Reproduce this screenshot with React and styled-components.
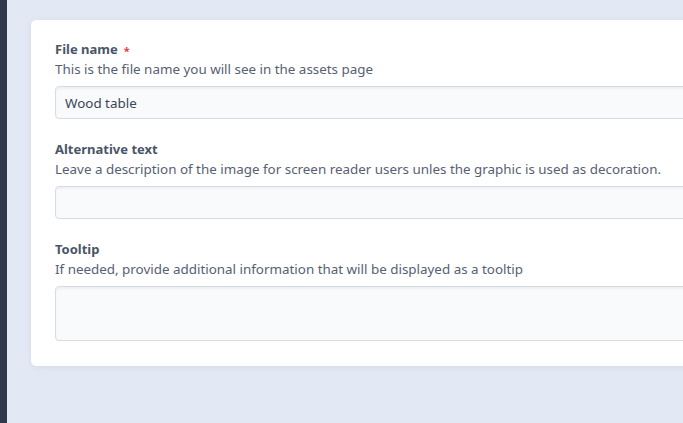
import React from 'react'
import styled, { createGlobalStyle } from 'styled-components'

const GlobalStyle = createGlobalStyle`
    html, body {
        margin: 0;
        padding: 0;
        height: 100%;
        overflow: hidden;
    }
    body {
        font-family: "Noto Sans", "Open Sans", sans-serif;
        background: #e3e9f4;
    }
`

const Layout = styled.div`
    display: flex;
    width: 683px;
    height: 423px;
    overflow: hidden;
`

const Sidebar = styled.aside`
    flex: 0 0 7px;
    background: #2e3a4c;
`

const Main = styled.main`
    flex: 1;
    padding: 20px 0 0 24px;
    overflow: hidden;
`

const Card = styled.section`
    width: 720px;
    background: #fff;
    border-radius: 5px;
    box-shadow: 0 1px 6px rgba(90, 110, 150, 0.12);
    padding: 20px 24px 25px;
    display: flex;
    flex-direction: column;
    gap: 21px;
`

const Field = styled.div`
    display: flex;
    flex-direction: column;
`

const Label = styled.label`
    font-size: 13px;
    font-weight: 700;
    color: #4a5568;
    line-height: 18px;
    display: flex;
    align-items: center;
    gap: 6px;
`

const Required = styled.span`
    color: #e53e3e;
    font-size: 11px;
    line-height: 1;
    position: relative;
    top: 1px;
`

const Hint = styled.p`
    margin: 2px 0 8px;
    font-size: 13.4px;
    line-height: 18px;
    color: #566074;
`

const Input = styled.input`
    box-sizing: border-box;
    height: ${p => p.$tall ? '55px' : '33px'};
    width: 100%;
    border: 1px solid #d6dbe4;
    border-radius: 4px;
    background: #f9fafc;
    box-shadow: inset 0 2px 2px rgba(160, 170, 190, 0.12);
    padding: 0 9px;
    font-family: inherit;
    font-size: 13.4px;
    color: #3a4556;
    outline: none;
`

const Textarea = styled(Input).attrs({ as: 'textarea' })`
    resize: none;
    padding: 8px 9px;
`

export default function App() {
    return (
        <>
            <GlobalStyle />
            <Layout>
                <Sidebar />
                <Main>
                    <Card>
                        <Field>
                            <Label>File name <Required>*</Required></Label>
                            <Hint>This is the file name you will see in the assets page</Hint>
                            <Input defaultValue='Wood table' />
                        </Field>
                        <Field>
                            <Label>Alternative text</Label>
                            <Hint>Leave a description of the image for screen reader users unles the graphic is used as decoration.</Hint>
                            <Input />
                        </Field>
                        <Field>
                            <Label>Tooltip</Label>
                            <Hint>If needed, provide additional information that will be displayed as a tooltip</Hint>
                            <Textarea $tall />
                        </Field>
                    </Card>
                </Main>
            </Layout>
        </>
    )
}
